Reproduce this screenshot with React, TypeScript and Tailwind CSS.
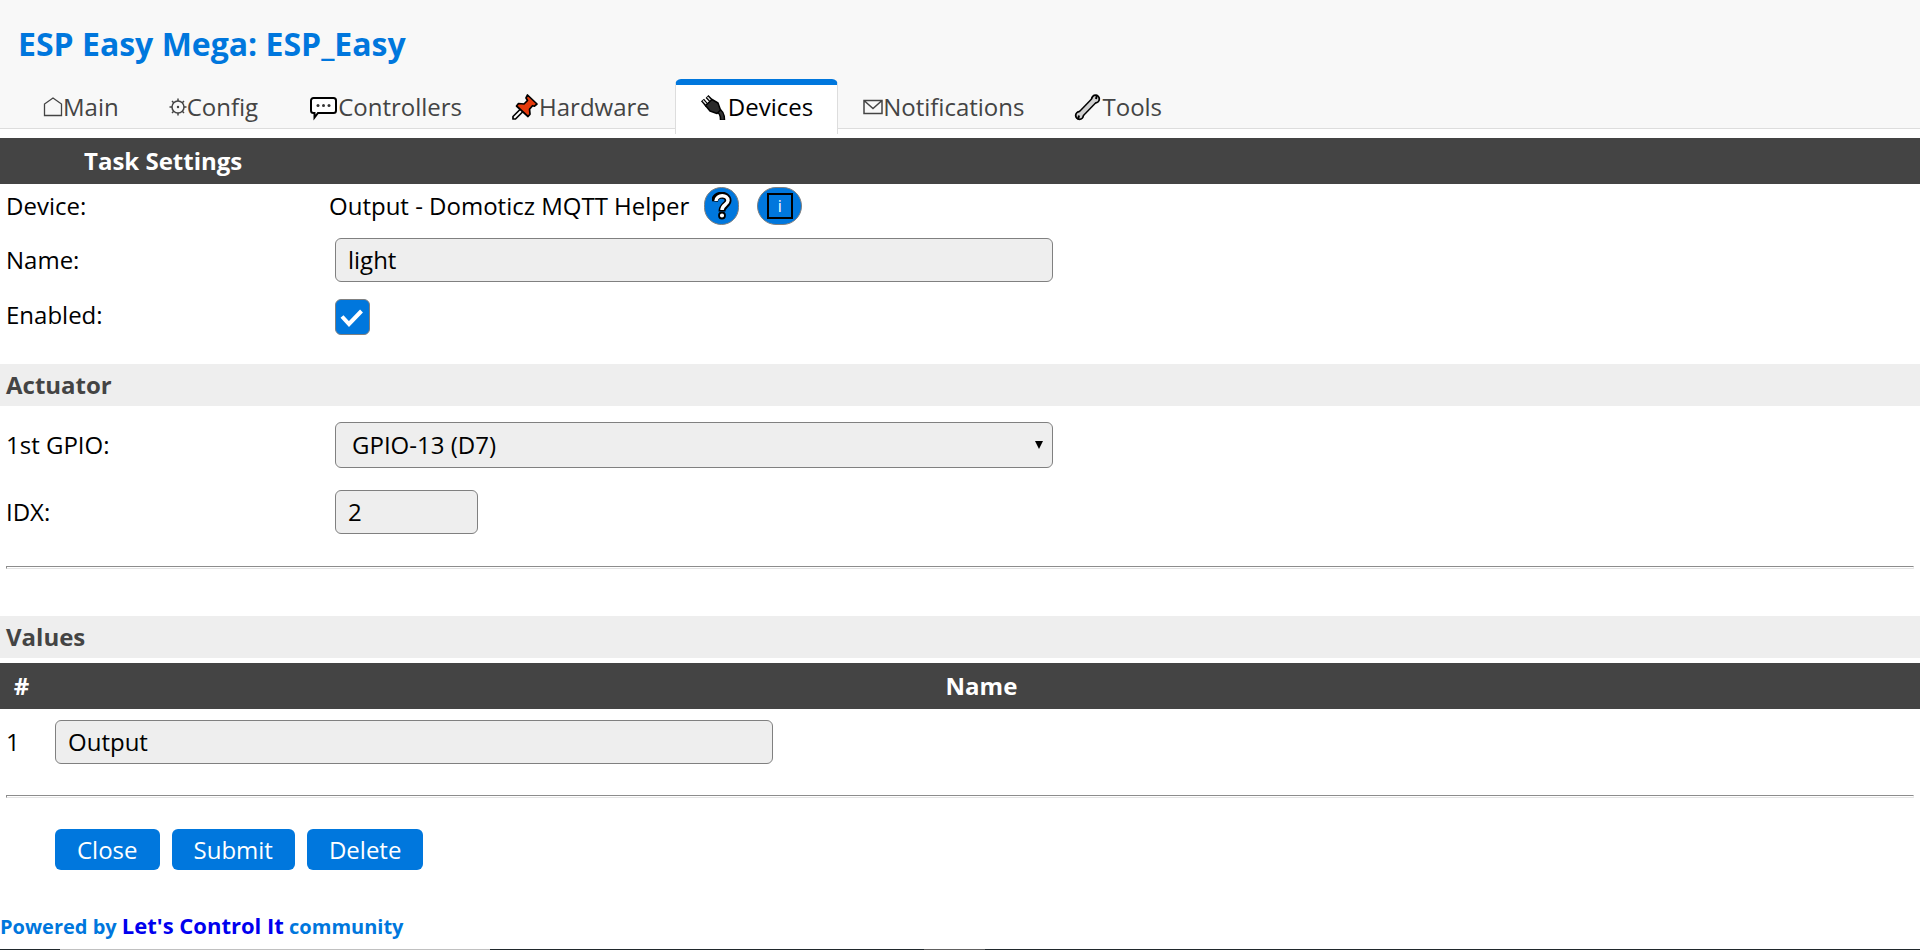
import type { ReactNode } from "react"

const inputClass =
  "h-11 rounded-md border border-[#808080] bg-[#eeeeee] px-3 pb-0.5 text-2xl text-black outline-none"
const buttonClass = "h-[41px] rounded-md bg-[#0077dd] px-[22px] text-2xl text-white"

function HomeIcon() {
  return (
    <svg className="h-5 w-5" viewBox="0 0 20 20" fill="none" stroke="currentColor" strokeWidth="1.3">
      <path d="M1.5 18.5V7L10 1l8.500 6v11.500z" />
    </svg>
  )
}

function GearIcon() {
  return (
    <svg className="h-[18px] w-[18px]" viewBox="0 0 18 18" fill="none" stroke="currentColor" strokeWidth="1.5">
      <circle cx="9" cy="9" r="6" />
      <circle cx="9" cy="9" r="1.2" fill="currentColor" stroke="none" />
      <path d="M9 .5V3M9 15v2.500M.5 9H3M15 9h2.500M3 3l1.700 1.700M13.300 13.300L15 15M15 3l-1.700 1.700M4.700 13.300L3 15" />
    </svg>
  )
}

function ChatIcon() {
  return (
    <svg className="h-7 w-[30px]" viewBox="-1 0 30 28" fill="white" stroke="black" strokeWidth="2">
      <path d="M4.500 5h20A2.500 2.500 0 0 1 27 7.500v10a2.500 2.500 0 0 1-2.500 2.500H9l-3.500 4.500V20h-1A2.500 2.500 0 0 1 2 17.500v-10A2.500 2.500 0 0 1 4.500 5z" />
      <g fill="#333333" stroke="none">
        <circle cx="9" cy="12.500" r="1.500" />
        <circle cx="14.500" cy="12.500" r="1.500" />
        <circle cx="20" cy="12.500" r="1.500" />
      </g>
    </svg>
  )
}

function PinIcon() {
  return (
    <svg className="h-7 w-[27px]" viewBox="1 0 27 28" stroke="black" strokeWidth="1.700" strokeLinejoin="round">
      <path d="M10 15.500L2 23.500V26h2.500l8-8z" fill="white" />
      <path d="M16.500 2l9.500 9-2.500 2.200-2-.5-3 3.500.5 5-2 2.300L5.500 13l2-2.500 5.500.5 3.500-3.500-1.500-2.500z" fill="#e53a0c" />
    </svg>
  )
}

function PlugIcon() {
  return (
    <svg className="h-7 w-[28px]" viewBox="0 0 28 28" fill="none">
      <path d="M2.500 7l5 6M7 3.500l5 5" stroke="black" strokeWidth="4" />
      <path d="M3 7.500l4 4.500M7.500 4l4 4.500" stroke="#e4e4e4" strokeWidth="1.300" />
      <path d="M17 17c4 1.500 5.500 4 5.500 10" stroke="black" strokeWidth="5.500" />
      <path d="M17 17c4 1.500 5.500 4 5.500 9.500" stroke="#333333" strokeWidth="2.500" />
      <path
        d="M5.500 12.500l6.500-6 6 3.500 2.500 7-3.500 3.500-7-2.500z"
        fill="#2b2b2b"
        stroke="black"
        strokeWidth="1.500"
        strokeLinejoin="round"
      />
    </svg>
  )
}

function MailIcon() {
  return (
    <svg className="h-4 w-5" viewBox="0 0 20 16" fill="none" stroke="currentColor" strokeWidth="1.500">
      <path d="M1 1.500h18v13H1zM1 1.500l9 8 9-8" />
    </svg>
  )
}

function WrenchIcon() {
  return (
    <svg className="h-7 w-[28px]" viewBox="0 0 28 28">
      <path d="M5.500 22.500L21.500 6" stroke="black" strokeWidth="7" />
      <g fill="#d0d0d0" stroke="black" strokeWidth="1.800">
        <circle cx="5.500" cy="22.500" r="3.800" />
        <circle cx="21.500" cy="6" r="3.800" />
      </g>
      <path d="M5.500 22.500L21.500 6" stroke="#d0d0d0" strokeWidth="4" />
      <path d="M5 22.500L4 26.500M22 6l1-4" stroke="black" strokeWidth="2" />
    </svg>
  )
}

interface Tab {
  label: string
  icon: ReactNode
  active?: boolean
}

const tabs: Tab[] = [
  { label: "Main", icon: <HomeIcon /> },
  { label: "Config", icon: <GearIcon /> },
  { label: "Controllers", icon: <ChatIcon /> },
  { label: "Hardware", icon: <PinIcon /> },
  { label: "Devices", icon: <PlugIcon />, active: true },
  { label: "Notifications", icon: <MailIcon /> },
  { label: "Tools", icon: <WrenchIcon /> },
]

function Header() {
  return (
    <header className="h-[129px] border-b border-[#dddddd] bg-[#f8f8f8]">
      <h1 className="px-[18px] pt-6 text-[32px] leading-10 font-bold text-[#0077dd]">ESP Easy Mega: ESP_Easy</h1>
      <nav className="flex pt-[15px] pl-[18px]">
        {tabs.map((tab) => (
          <a
            key={tab.label}
            href="#"
            className={
              tab.active
                ? "flex h-[55px] items-center rounded-t-md border-x border-t-[6px] border-x-[#dddddd] border-t-[#0077dd] bg-white px-6 pb-1.5 text-black"
                : "flex h-[55px] items-center border-x border-t-[6px] border-transparent px-6 pb-1.5 text-[#444444]"
            }
          >
            {tab.icon}
            {tab.label}
          </a>
        ))}
      </nav>
    </header>
  )
}

function Band({ children }: { children: ReactNode }) {
  return <h2 className="h-[42px] bg-[#eeeeee] px-1.5 leading-[42px] font-bold text-[#444444]">{children}</h2>
}

function Rule() {
  return <hr className="mx-1.5 h-[3px] border border-t-[#8c8c8c] border-r-[#eeeeee] border-b-[#e4e4e4] border-l-[#8c8c8c]" />
}

export default function App() {
  return (
    <div className="flex min-h-screen flex-col bg-white font-['Open_Sans','Noto_Sans',sans-serif] text-2xl text-black">
      <Header />

      <main className="pt-[9px]">
        <h2 className="h-[46px] bg-[#444444] px-[84px] leading-[46px] font-bold text-white">Task Settings</h2>

        <div className="grid grid-cols-[323px_1fr] items-center px-1.5">
          <span>Device:</span>
          <div className="flex h-11 items-center">
            <span>Output - Domoticz MQTT Helper</span>
            <a href="#" aria-label="Help" className="ml-[15px] flex h-[38px] w-[35px] items-center justify-center rounded-full border border-[#808080] bg-[#0077dd]">
              <svg className="h-7 w-5" viewBox="0 0 20 28" fill="none">
                <path d="M2.500 9.500C3 1 16 1.500 16 8.500c0 4.500-6 4.500-6 11" stroke="black" strokeWidth="7" />
                <path d="M4 9C4.500 2 16 2 16 8.500c0 4-6 4.500-6 9.500" stroke="white" strokeWidth="3.500" />
                <circle cx="10" cy="23.500" r="3" fill="white" stroke="black" strokeWidth="1.800" />
              </svg>
            </a>
            <a href="#" aria-label="Info" className="ml-[18px] flex h-[38px] w-[45px] items-center justify-center rounded-full border border-[#808080] bg-[#0077dd]">
              <span className="flex h-[26px] w-[26px] items-center justify-center border-2 border-black text-base text-white">i</span>
            </a>
          </div>

          <label htmlFor="name">Name:</label>
          <div className="flex h-16 items-center pl-1.5">
            <input id="name" type="text" defaultValue="light" className={`${inputClass} w-[718px]`} />
          </div>

          <label htmlFor="enabled" className="pb-1">Enabled:</label>
          <div className="flex h-[50px] items-center pl-1.5">
            <div className="relative">
              <input
                id="enabled"
                type="checkbox"
                defaultChecked
                className="peer block h-9 w-[35px] appearance-none rounded-md border border-[#808080] bg-[#eeeeee] checked:bg-[#0077dd]"
              />
              <svg className="pointer-events-none absolute inset-0 hidden h-9 w-[35px] peer-checked:block" viewBox="0 0 35 36" fill="none" stroke="white" strokeWidth="4">
                <path d="M7 17.500l7 7.500L26.500 12" />
              </svg>
            </div>
          </div>
        </div>

        <div className="pt-[22px]">
          <Band>Actuator</Band>
        </div>
        <div className="grid grid-cols-[323px_1fr] items-center px-1.5 pt-1.5 pb-5">
          <label htmlFor="gpio">1st GPIO:</label>
          <div className="flex h-[66px] items-center pl-1.5">
            <div className="relative w-[718px]">
              <select
                id="gpio"
                className="h-[46px] w-full appearance-none rounded-md border border-[#808080] bg-[#eeeeee] px-4 text-2xl text-black outline-none"
              >
                <option>GPIO-13 (D7)</option>
              </select>
              <svg className="pointer-events-none absolute top-[19px] right-[10px] h-2 w-2" viewBox="0 0 8 8">
                <path d="M0 0h8L4 8z" />
              </svg>
            </div>
          </div>

          <label htmlFor="idx">IDX:</label>
          <div className="flex h-[68px] items-center pl-1.5">
            <input id="idx" type="text" defaultValue="2" className={`${inputClass} w-[143px]`} />
          </div>
        </div>
        <Rule />

        <div className="pt-[47px] pb-[5px]">
          <Band>Values</Band>
        </div>
        <table className="w-full">
          <thead>
            <tr className="h-[46px] bg-[#444444] text-white">
              <th className="w-[49px] pr-1.5 font-bold">#</th>
              <th className="pr-1.5 font-bold">Name</th>
            </tr>
          </thead>
          <tbody>
            <tr className="h-[66px]">
              <td className="pl-1.5">1</td>
              <td className="pl-1.5">
                <input aria-label="Value name" type="text" defaultValue="Output" className={`${inputClass} block w-[718px]`} />
              </td>
            </tr>
          </tbody>
        </table>

        <div className="pt-5">
          <Rule />
        </div>
        <div className="flex gap-3 pt-[31px] pl-[55px]">
          <button type="button" className={buttonClass}>Close</button>
          <button type="submit" className={buttonClass}>Submit</button>
          <button type="button" className={buttonClass}>Delete</button>
        </div>
      </main>

      <footer className="flex grow flex-col justify-between pt-[39px]">
        <p className="text-xl leading-8 font-bold text-[#0077dd]">
          Powered by <a href="#" className="text-[22px] text-[#0000ee]">Let&apos;s Control It</a> community
        </p>
        <div className="flex h-px bg-[#20282c]">
          <div className="ml-[60px] w-[430px] bg-[#c0c0c0]" />
          <div className="ml-[434px] w-[61px] bg-[#606060]" />
        </div>
      </footer>
    </div>
  )
}
